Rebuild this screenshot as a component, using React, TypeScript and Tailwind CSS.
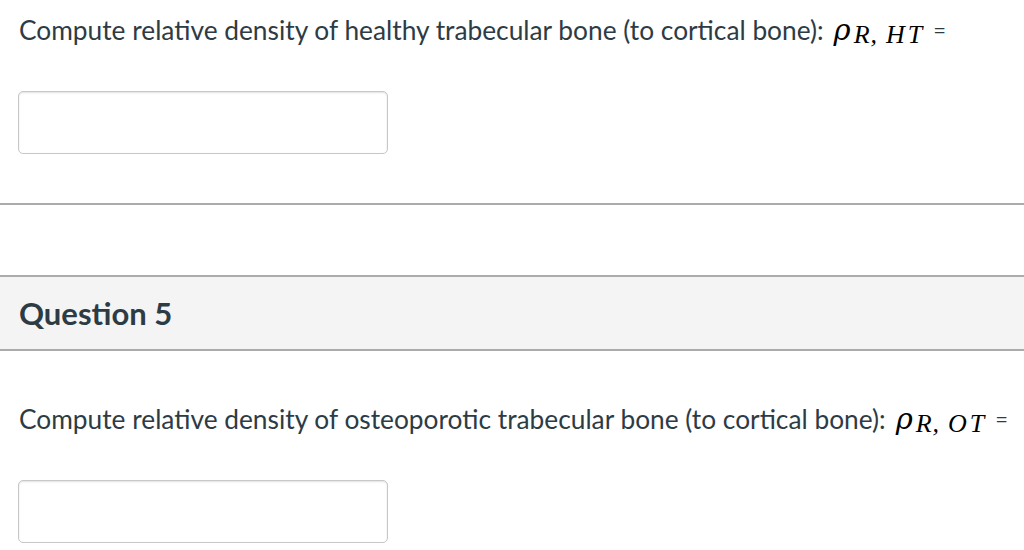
import React from "react";

const textColor = "text-[#2d3b45]";

function Math({ a, b }: { a: string; b: string }) {
  return (
    <span className="inline-flex items-baseline ml-[10px]">
      <span className="[font-family:'DejaVu_Serif',serif] italic text-[29px] leading-none text-black">ρ</span>
      <span className="[font-family:'Liberation_Serif',serif] italic text-[26px] leading-none text-black relative top-[3px] ml-[3px] tracking-[1px]">
        {a},
      </span>
      <span className="[font-family:'Liberation_Serif',serif] italic text-[26px] leading-none text-black relative top-[3px] ml-[8px] tracking-[3px]">
        {b}
      </span>
      <span className="ml-[8px] text-[22px] relative -top-[2px]">=</span>
    </span>
  );
}

function Input() {
  return (
    <div className="w-[370px] h-[63px] rounded-[5px] border border-[#c7c7c7] bg-white shadow-[inset_0_1px_2px_rgba(0,0,0,0.12)]" />
  );
}

export default function App() {
  return (
    <div className={`w-[1024px] h-[550px] overflow-hidden bg-white ${textColor} [font-family:Lato,'Liberation_Sans',sans-serif]`}>
      <div className="px-[19px] pt-[12px]">
        <p className="text-[26.3px] leading-[36px] whitespace-nowrap">
          Compute relative density of healthy trabecular bone (to cortical bone):
          <Math a="R" b="HT" />
        </p>
        <div className="mt-[41px] -ml-[1px]">
          <Input />
        </div>
      </div>
      <div className="mt-[49px] h-[2px] bg-[#ababab]" />
      <div className="mt-[70px] border-y-2 border-[#ababab] bg-[#f4f4f4] h-[76px] flex items-center px-[19px]">
        <h2 className="text-[31px] font-bold leading-none">Question 5</h2>
      </div>
      <div className="px-[19px] pt-[50px]">
        <p className="text-[26.3px] leading-[36px] whitespace-nowrap">
          Compute relative density of osteoporotic trabecular bone (to cortical bone):
          <Math a="R" b="OT" />
        </p>
        <div className="mt-[41px] -ml-[1px]">
          <Input />
        </div>
      </div>
    </div>
  );
}
